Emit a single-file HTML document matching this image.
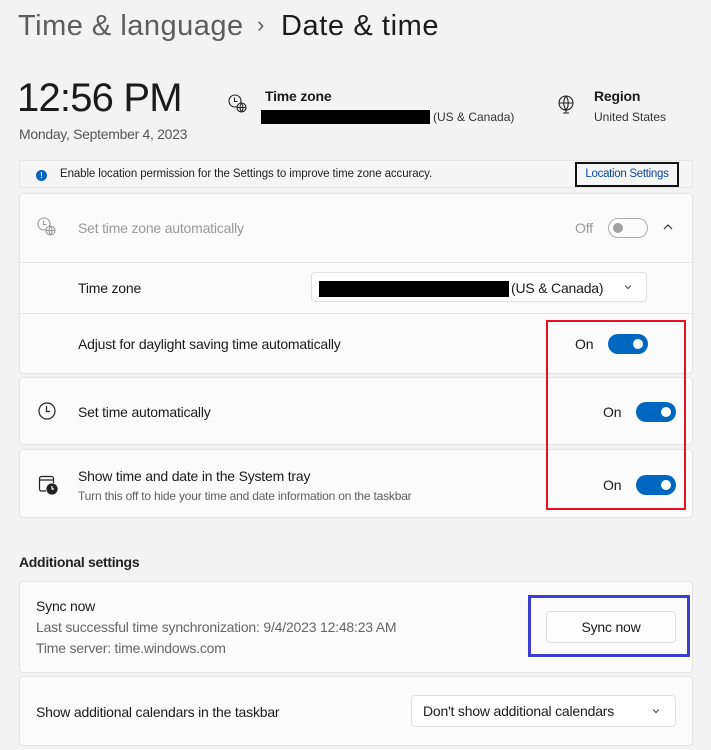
<!DOCTYPE html>
<html><head><meta charset="utf-8"><style>
*{box-sizing:border-box;margin:0;padding:0}
body{width:711px;height:750px;background:#f3f3f3;font-family:"Liberation Sans",sans-serif;color:#1b1b1b;position:relative;overflow:hidden}
.a{position:absolute;white-space:nowrap}
.card{position:absolute;left:19px;width:674px;background:#fbfbfb;border:1px solid #e5e5e5;border-radius:4px}
.t{font-size:14px;letter-spacing:-0.2px}
.s{font-size:12px;color:#606060;letter-spacing:-0.2px}
.tg{position:absolute;width:40px;height:20px;border-radius:10px;background:#0067c0}
.tg::after{content:"";position:absolute;right:5px;top:5px;width:10px;height:10px;border-radius:50%;background:#fff}
.sep{position:absolute;left:19px;width:674px;height:1px;background:#e5e5e5}
</style></head><body>
<div class="a" style="left:18px;top:10px;font-size:29px;color:#5d5d5d;letter-spacing:0.5px">Time &amp; language</div>
<div class="a" style="left:257px;top:12px;font-size:22px;color:#5d5d5d">›</div>
<div class="a" style="left:281px;top:10px;font-size:29px;color:#1b1b1b;letter-spacing:0.6px">Date &amp; time</div>

<div class="a" style="left:17px;top:76px;font-size:40px;letter-spacing:-0.8px;font-weight:500">12:56 PM</div>
<div class="a" style="left:19px;top:126px;font-size:14px;color:#555;letter-spacing:-0.3px">Monday, September 4, 2023</div>

<svg class="a" style="left:228px;top:94px" width="20" height="20" viewBox="0 0 20 20" fill="none" stroke="#222" stroke-width="1.1"><circle cx="7" cy="7" r="6"/><path d="M6.5 3.5v4h3"/><circle cx="13.5" cy="13.5" r="4.5" fill="#f3f3f3"/><path d="M9 13.5h9M13.5 9c-2 3-2 6 0 9M13.5 9c2 3 2 6 0 9"/></svg>
<div class="a" style="left:265px;top:88px;font-size:14px;font-weight:bold;letter-spacing:-0.2px">Time zone</div>
<div class="a" style="left:261px;top:110px;width:169px;height:14px;background:#000"></div>
<div class="a" style="left:433px;top:110px;font-size:12px;color:#333">(US &amp; Canada)</div>
<svg class="a" style="left:556px;top:94px" width="20" height="20" viewBox="0 0 20 20" fill="none" stroke="#222" stroke-width="1.1"><circle cx="10" cy="9" r="7"/><path d="M3 9h14M10 2c-3 4-3 10 0 14M10 2c3 4 3 10 0 14M10 16v3M7 19h6"/></svg>
<div class="a" style="left:594px;top:88px;font-size:14px;font-weight:bold;letter-spacing:-0.2px">Region</div>
<div class="a" style="left:594px;top:110px;font-size:12px;color:#333">United States</div>

<div class="a" style="left:19px;top:160px;width:674px;height:28px;background:#f5f5f5;border:1px solid #e5e5e5"></div>
<div class="a" style="left:36px;top:170px;width:11px;height:11px;border-radius:50%;background:#0067c0;color:#fff;font-size:8px;text-align:center;line-height:11px;font-weight:bold">!</div>
<div class="a" style="left:60px;top:168px;font-size:11.5px;color:#222;letter-spacing:-0.1px">Enable location permission for the Settings to improve time zone accuracy.</div>
<div class="a" style="left:575px;top:162px;width:104px;height:25px;border:2px solid #111;font-size:11.5px;color:#0a4aa6;line-height:21px;text-align:center;letter-spacing:-0.3px">Location Settings</div>

<div class="card" style="top:193px;height:181px"></div>
<div class="sep" style="top:262px"></div><div class="sep" style="top:313px"></div>
<svg class="a" style="left:37px;top:217px" width="20" height="20" viewBox="0 0 20 20" fill="none" stroke="#999" stroke-width="1.1"><circle cx="7" cy="7" r="6"/><path d="M6.5 3.5v4h3"/><circle cx="13.5" cy="13.5" r="4.5" fill="#fbfbfb"/><path d="M9 13.5h9M13.5 9c-2 3-2 6 0 9M13.5 9c2 3 2 6 0 9"/></svg>
<div class="a t" style="left:78px;top:220px;color:#9a9a9a">Set time zone automatically</div>
<div class="a t" style="left:575px;top:220px;color:#9a9a9a">Off</div>
<div class="a" style="left:608px;top:218px;width:40px;height:20px;border-radius:10px;border:1px solid #b0b0b0"></div>
<div class="a" style="left:613px;top:223px;width:10px;height:10px;border-radius:50%;background:#a0a0a0"></div>
<svg class="a" style="left:662px;top:222px" width="12" height="10" viewBox="0 0 12 10" fill="none" stroke="#333" stroke-width="1.2"><path d="M2 7l4-4 4 4"/></svg>
<div class="a t" style="left:78px;top:280px">Time zone</div>
<div class="a" style="left:311px;top:272px;width:336px;height:30px;background:#fff;border:1px solid #e0e0e0;border-radius:4px"></div>
<div class="a" style="left:319px;top:281px;width:190px;height:16px;background:#000"></div>
<div class="a t" style="left:511px;top:280px">(US &amp; Canada)</div>
<svg class="a" style="left:623px;top:283px" width="10" height="8" viewBox="0 0 10 8" fill="none" stroke="#444"><path d="M2 2.5l3 3 3-3"/></svg>
<div class="a t" style="left:78px;top:336px">Adjust for daylight saving time automatically</div>
<div class="a t" style="left:575px;top:336px">On</div>
<div class="tg" style="left:608px;top:334px"></div>

<div class="card" style="top:377px;height:68px"></div>
<svg class="a" style="left:37px;top:401px" width="20" height="20" viewBox="0 0 20 20" fill="none" stroke="#222" stroke-width="1.2"><circle cx="10" cy="10" r="8"/><path d="M9.5 5v5.5h3.5"/></svg>
<div class="a t" style="left:78px;top:404px">Set time automatically</div>
<div class="a t" style="left:603px;top:404px">On</div>
<div class="tg" style="left:636px;top:402px"></div>

<div class="card" style="top:449px;height:69px"></div>
<svg class="a" style="left:37px;top:474px" width="22" height="22" viewBox="0 0 22 22" fill="none" stroke="#222" stroke-width="1.2"><path d="M9 17H4.5a2 2 0 0 1-2-2V4.5a2 2 0 0 1 2-2h10a2 2 0 0 1 2 2V9M2.5 6h14"/><circle cx="15" cy="15" r="5" fill="#222"/><path d="M15 12v3h2" stroke="#fff"/></svg>
<div class="a t" style="left:78px;top:468px">Show time and date in the System tray</div>
<div class="a s" style="left:78px;top:489px">Turn this off to hide your time and date information on the taskbar</div>
<div class="a t" style="left:603px;top:477px">On</div>
<div class="tg" style="left:636px;top:475px"></div>

<div class="a" style="left:546px;top:320px;width:140px;height:190px;border:2px solid #e81123"></div>

<div class="a" style="left:19px;top:554px;font-size:14px;font-weight:bold;letter-spacing:-0.3px;color:#222">Additional settings</div>

<div class="card" style="top:581px;height:92px"></div>
<div class="a t" style="left:36px;top:598px">Sync now</div>
<div class="a t" style="left:36px;top:619px;color:#666">Last successful time synchronization: 9/4/2023 12:48:23 AM</div>
<div class="a t" style="left:36px;top:640px;color:#666">Time server: time.windows.com</div>
<div class="a" style="left:546px;top:611px;width:130px;height:32px;background:#fdfdfd;border:1px solid #e0e0e0;border-radius:4px;font-size:14px;text-align:center;line-height:30px;letter-spacing:-0.2px">Sync now</div>
<div class="a" style="left:528px;top:595px;width:162px;height:62px;border:3px solid #3b3fd1"></div>

<div class="card" style="top:676px;height:70px"></div>
<div class="a t" style="left:36px;top:704px">Show additional calendars in the taskbar</div>
<div class="a" style="left:411px;top:695px;width:265px;height:32px;background:#fff;border:1px solid #e0e0e0;border-radius:4px"></div>
<div class="a t" style="left:423px;top:703px">Don't show additional calendars</div>
<svg class="a" style="left:651px;top:707px" width="10" height="8" viewBox="0 0 10 8" fill="none" stroke="#444"><path d="M2 2.5l3 3 3-3"/></svg>
</body></html>
